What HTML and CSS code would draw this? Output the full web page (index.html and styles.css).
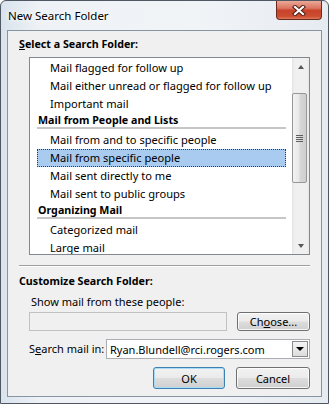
FILE: index.html
```html
<!DOCTYPE html>
<html lang="en">
<head>
    <meta charset="UTF-8">
    <title>New Search Folder</title>
    <link rel="stylesheet" href="styles.css">
</head>
<body>
    <div class="window">
        <div class="titlebar">
            <span class="title">New Search Folder</span>
            <div class="close">
                <svg width="14" height="11" viewBox="0 0 14 11">
                    <path d="M3 2 L11 9 M11 2 L3 9" stroke="#4d1e14" stroke-width="4.2" stroke-linecap="square" fill="none"/>
                    <path d="M3 2 L11 9 M11 2 L3 9" stroke="#fff" stroke-width="2.2" stroke-linecap="square" fill="none"/>
                </svg>
            </div>
        </div>

        <div class="client">
            <div class="section-label"><u>S</u>elect a Search Folder:</div>

            <div class="listbox">
                <div class="list-items">
                    <div class="item">Mail flagged for follow up</div>
                    <div class="item">Mail either unread or flagged for follow up</div>
                    <div class="item">Important mail</div>
                    <div class="group">Mail from People and Lists</div>
                    <div class="item">Mail from and to specific people</div>
                    <div class="item selected">Mail from specific people</div>
                    <div class="item">Mail sent directly to me</div>
                    <div class="item">Mail sent to public groups</div>
                    <div class="group">Organizing Mail</div>
                    <div class="item">Categorized mail</div>
                    <div class="item">Large mail</div>
                </div>
                <div class="scrollbar">
                    <div class="arrow up"></div>
                    <div class="track">
                        <div class="thumb" style="margin-top: 18px; height: 90px;">
                            <span class="grip"></span>
                        </div>
                    </div>
                    <div class="arrow down"></div>
                </div>
            </div>

            <div class="separator"></div>

            <div class="section-label">Customize Search Folder:</div>
            <div class="field-label">Show mail from these people:</div>
            <div class="row people-row">
                <div class="textbox"></div>
                <button class="btn choose">Ch<u>o</u>ose...</button>
            </div>

            <div class="row search-row">
                <label class="search-label">S<u>e</u>arch mail in:</label>
                <div class="combo">
                    <span class="combo-text">Ryan.Blundell@rci.rogers.com</span>
                    <span class="combo-btn"></span>
                </div>
            </div>

            <div class="row buttons-row">
                <button class="btn default">OK</button>
                <button class="btn cancel">Cancel</button>
            </div>
        </div>
    </div>
</body>
</html>
```

FILE: styles.css
```css
body {
    margin: 0;
    font-family: "Noto Sans", sans-serif;
    font-size: 11px;
    color: #000;
    background-color: #fff;
}
.window {
    width: 329px;
    height: 404px;
    box-sizing: border-box;
    border: 1px solid #4f5862;
    border-radius: 6px 6px 0 0;
    padding: 0 6px 6px 6px;
    display: flex;
    flex-direction: column;
    background: linear-gradient(to right, #d9e3ed 0%, #eef2f6 12%, #f1f4f7 60%, #e6ebf1 100%);
}
.titlebar {
    height: 29px;
    flex-shrink: 0;
    display: flex;
    justify-content: space-between;
}
.title {
    padding: 7px 0 0 1px;
    font-size: 11.5px;
    line-height: 16px;
    text-shadow: 0 0 6px #fff, 0 0 3px #fff;
}
.close {
    width: 46px;
    height: 19px;
    box-sizing: border-box;
    border: 1px solid #6b2a1f;
    border-top: none;
    border-radius: 0 0 4px 4px;
    background: linear-gradient(#eba898 0%, #dc7561 40%, #c7432a 52%, #cd4d30 85%, #df7a5c 100%);
    display: flex;
    align-items: center;
    justify-content: center;
}
.client {
    flex: 1;
    border: 1px solid #8794a2;
    background-color: #f0f0f0;
    padding: 5px 11px 0 11px;
}
.section-label {
    font-weight: bold;
    font-size: 10.7px;
    line-height: 16px;
}
.listbox {
    margin: 5px 0 0 10px;
    height: 198px;
    box-sizing: border-box;
    border: 1px solid #828790;
    background-color: #fff;
    display: flex;
}
.list-items {
    flex: 1;
    padding: 1px 6px 0 7px;
    overflow: hidden;
}
.item {
    height: 18px;
    line-height: 18px;
    padding-left: 13px;
    white-space: nowrap;
    box-sizing: border-box;
    font-size: 11.1px;
}
.item.selected {
    background-color: #a8cbef;
    border: 1px dotted #3a3a3a;
    line-height: 16px;
    padding-left: 12px;
}
.group {
    font-weight: bold;
    font-size: 10.7px;
    line-height: 14px;
    padding-left: 1px;
    border-bottom: 2px solid #c6c6c6;
    margin-bottom: 2px;
    white-space: nowrap;
}
.scrollbar {
    width: 17px;
    display: flex;
    flex-direction: column;
    background: linear-gradient(to right, #e3e3e3 0%, #f0f0f0 15%, #f0f0f0 85%, #e9e9e9 100%);
}
.arrow {
    height: 17px;
    display: flex;
    align-items: center;
    justify-content: center;
}
.arrow::before {
    content: "";
    border-left: 3.5px solid transparent;
    border-right: 3.5px solid transparent;
}
.arrow.up::before {
    border-bottom: 4px solid #555;
}
.arrow.down::before {
    border-top: 4px solid #555;
}
.track {
    flex: 1;
}
.thumb {
    width: 15px;
    box-sizing: border-box;
    border: 1px solid #979797;
    border-radius: 2px;
    background: linear-gradient(to right, #f3f3f3 0%, #e8e8e8 45%, #d6d6d6 55%, #cfcfcf 100%);
    display: flex;
    align-items: center;
    justify-content: center;
}
.grip {
    width: 7px;
    height: 7px;
    background: repeating-linear-gradient(#5f5f5f 0, #5f5f5f 1px, transparent 1px, transparent 2px);
}
.separator {
    margin-top: 10px;
    border-top: 1px solid #a0a0a0;
    border-bottom: 1px solid #fff;
}
.separator + .section-label {
    margin-top: 6px;
}
.field-label {
    margin: 5px 0 0 12px;
    line-height: 16px;
}
.row {
    display: flex;
    margin-left: 10px;
}
.people-row {
    margin-top: 2px;
    height: 19px;
    gap: 10px;
}
.textbox {
    flex: 1;
    border: 1px solid #c2c2c2;
    background-color: #f0f0f0;
}
.btn {
    font-family: inherit;
    font-size: 11px;
    color: #000;
    padding: 0;
    border: 1px solid #707070;
    border-radius: 3px;
    background: linear-gradient(#f2f2f2 0%, #ebebeb 48%, #dddddd 52%, #cfcfcf 100%);
    box-shadow: inset 0 0 0 1px rgba(255, 255, 255, 0.8);
}
.choose {
    width: 73px;
}
.search-row {
    margin-top: 8px;
    height: 20px;
    align-items: center;
}
.search-label {
    flex: 1;
    line-height: 16px;
}
.combo {
    width: 204px;
    height: 20px;
    box-sizing: border-box;
    border: 1px solid #abadb3;
    background-color: #fff;
    display: flex;
    align-items: center;
}
.combo-text {
    flex: 1;
    padding-left: 3px;
    white-space: nowrap;
}
.combo-btn {
    width: 16px;
    height: 16px;
    margin-right: 1px;
    box-sizing: border-box;
    border: 1px solid #8a8a8a;
    background: linear-gradient(#f4f4f4, #dcdcdc);
    display: flex;
    align-items: center;
    justify-content: center;
}
.combo-btn::before {
    content: "";
    border-left: 4px solid transparent;
    border-right: 4px solid transparent;
    border-top: 4px solid #000;
}
.buttons-row {
    margin-top: 8px;
    height: 22px;
    justify-content: flex-end;
    gap: 11px;
}
.default {
    width: 72px;
    border-color: #3c7fb1;
    box-shadow: inset 0 0 0 1px #a9dbf6;
}
.cancel {
    width: 74px;
}
```
